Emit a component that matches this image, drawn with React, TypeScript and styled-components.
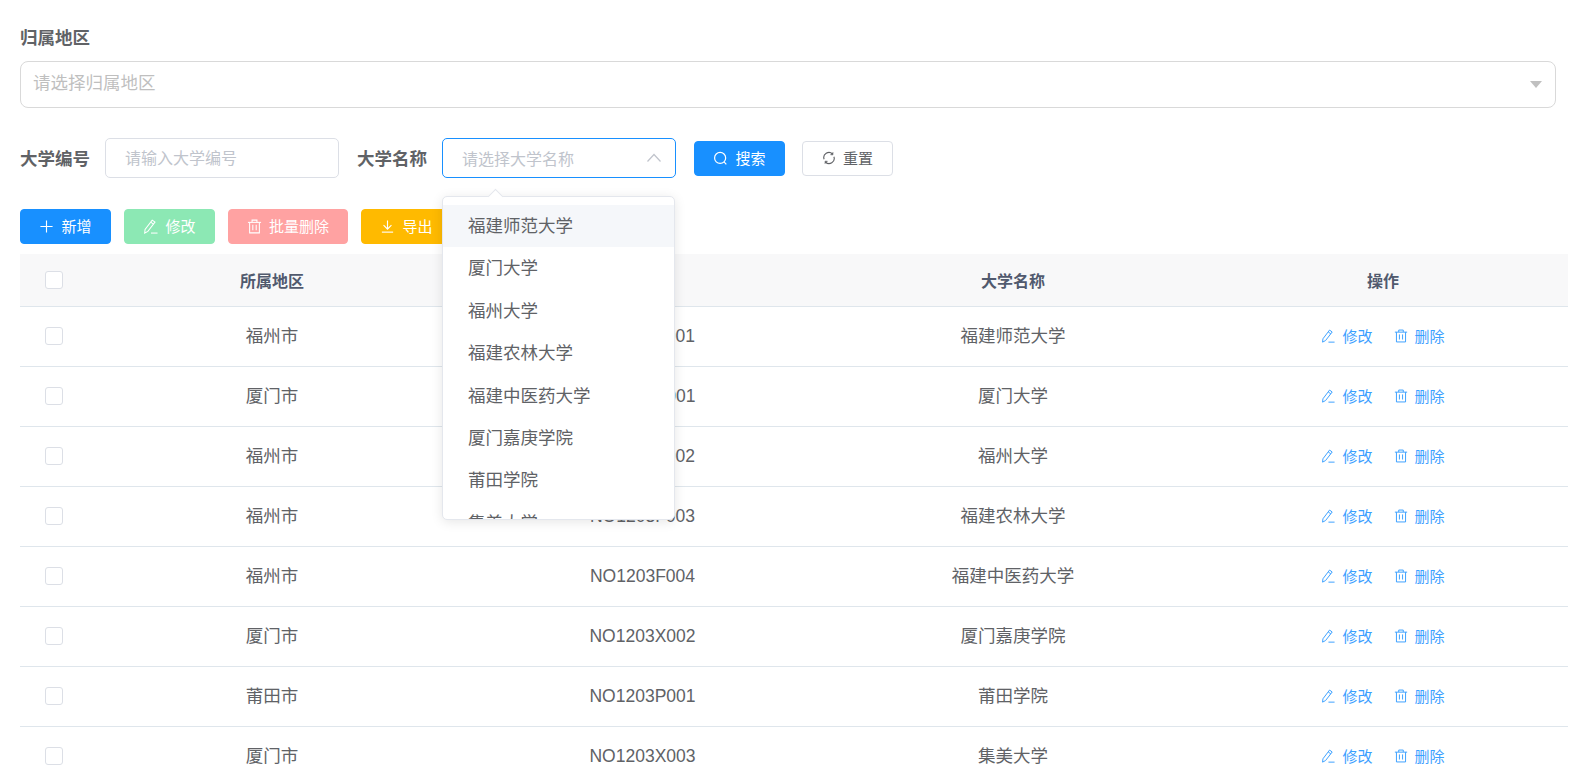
import React from 'react';
import styled, { createGlobalStyle } from 'styled-components';

const GlobalStyle = createGlobalStyle`
  html, body {
    margin: 0;
    height: 100%;
    overflow: hidden;
    background: #fff;
  }
  body {
    font-family: "Liberation Sans", "Noto Sans CJK SC", sans-serif;
    color: #606266;
  }
`;

const Page = styled.div`
  padding: 20px 13px 0 20px;
  height: 758px;
  overflow: hidden;
`;

const RegionField = styled.div`
  margin-right: 12px;
`;

const RegionLabel = styled.div`
  font-size: 17.5px;
  font-weight: bold;
  line-height: 36px;
  margin-bottom: 5px;
`;

const RegionSelect = styled.div`
  height: 47px;
  box-sizing: border-box;
  border: 1px solid #d9d9d9;
  border-radius: 8px;
  padding: 0 13px 7px 12px;
  display: flex;
  align-items: center;
  justify-content: space-between;
  font-size: 17.5px;
  color: #bfbfbf;
`;

const Caret = styled.span`
  width: 0;
  height: 0;
  margin-top: 7px;
  border-left: 6px solid transparent;
  border-right: 6px solid transparent;
  border-top: 7px solid #c0c0c0;
`;

const SearchRow = styled.div`
  margin-top: 30px;
  display: flex;
  align-items: center;
  height: 40px;
`;

const FieldLabel = styled.label`
  font-size: 17.5px;
  font-weight: bold;
  margin-right: 15px;
  padding-bottom: 2px;
`;

const TextInput = styled.input`
  width: 234px;
  height: 40px;
  box-sizing: border-box;
  border: 1px solid #dcdfe6;
  border-radius: 5px;
  padding: 2px 19px 0;
  margin-right: 18px;
  outline: none;
  font-family: inherit;
  font-size: 16px;
  &::placeholder {
    color: #c0c4cc;
    opacity: 1;
  }
`;

const SelectWrap = styled.div`
  position: relative;
  margin-right: 18px;
`;

const SelectBox = styled.div`
  width: 234px;
  height: 40px;
  box-sizing: border-box;
  border: 1px solid #1890ff;
  border-radius: 5px;
  padding: 0 13px 0 19px;
  display: flex;
  align-items: center;
  justify-content: space-between;
  font-size: 16px;
  color: #c0c4cc;
`;

const Dropdown = styled.div`
  position: absolute;
  top: 58px;
  left: 0;
  width: 233px;
  height: 324px;
  box-sizing: border-box;
  background: #fff;
  border: 1px solid #e4e7ed;
  border-radius: 5px;
  box-shadow: 0 2px 12px 0 rgba(0, 0, 0, 0.1);
  z-index: 10;
  &::before {
    content: '';
    position: absolute;
    top: -6px;
    left: 47px;
    width: 10px;
    height: 10px;
    background: #fff;
    border-top: 1px solid #e4e7ed;
    border-left: 1px solid #e4e7ed;
    transform: rotate(45deg);
  }
`;

const OptionList = styled.ul`
  list-style: none;
  margin: 0;
  padding: 8px 0 0;
  height: 100%;
  box-sizing: border-box;
  overflow: hidden;
  border-radius: 5px;
  position: relative;
`;

const Option = styled.li<{ $active?: boolean }>`
  height: 42.4px;
  line-height: 42.4px;
  padding-left: 25px;
  font-size: 17.5px;
  color: #606266;
  background: ${({ $active }) => ($active ? '#f5f7fa' : 'transparent')};
`;

const Button = styled.button<{ $bg: string }>`
  height: 35px;
  box-sizing: border-box;
  border: 1px solid ${({ $bg }) => ($bg === '#fff' ? '#dcdfe6' : $bg)};
  border-radius: 4px;
  background: ${({ $bg }) => $bg};
  color: ${({ $bg }) => ($bg === '#fff' ? '#606266' : '#fff')};
  font-family: inherit;
  font-size: 15px;
  display: inline-flex;
  align-items: center;
  justify-content: center;
  gap: 7px;
  padding: 0 0 2px;
  width: 91px;
  svg {
    margin-top: 2px;
  }
`;

const WideButton = styled(Button)`
  width: 120px;
`;

const ResetButton = styled(Button)`
  margin-left: 17px;
`;

const Toolbar = styled.div`
  margin-top: 31px;
  margin-bottom: 10px;
  display: flex;
  gap: 13px;
`;

const Table = styled.table`
  width: 1548px;
  border-collapse: collapse;
  table-layout: fixed;
`;

const HeadCell = styled.th`
  height: 52px;
  padding: 0;
  background: #f8f8f9;
  border-bottom: 1px solid #dfe6ec;
  font-size: 16px;
  font-weight: bold;
  color: #515a6e;
  text-align: center;
`;

const Cell = styled.td<{ $lift?: number }>`
  height: 60px;
  box-sizing: border-box;
  padding: 0 0 ${({ $lift }) => $lift ?? 0}px;
  border-bottom: 1px solid #dfe6ec;
  font-size: 17.5px;
  color: #606266;
  text-align: center;
`;

const CheckBox = styled.span`
  display: block;
  width: 18px;
  height: 18px;
  box-sizing: border-box;
  margin: 0 auto;
  border: 1px solid #dcdfe6;
  border-radius: 3px;
  background: #fff;
`;

const Actions = styled.div`
  display: flex;
  justify-content: center;
  gap: 21px;
`;

const ActionLink = styled.a`
  display: inline-flex;
  align-items: center;
  gap: 7px;
  font-size: 15px;
  color: #1890ff;
  opacity: 0.85;
  svg {
    width: 14px;
    height: 14px;
    margin-top: 2px;
  }
`;

const Icon = styled.svg.attrs({
  viewBox: '0 0 16 16',
  fill: 'none',
  stroke: 'currentColor',
  strokeWidth: 1.1,
})<{ $size?: number }>`
  width: ${({ $size }) => $size ?? 15}px;
  height: ${({ $size }) => $size ?? 15}px;
  flex: none;
`;

const ChevronIcon = styled(Icon)`
  color: #c0c4cc;
`;

const EditIcon = () => (
  <Icon>
    <path d="M9.8 1.2 12.8 3.4 5.2 13.2 1.8 15 2.2 11.2Z" />
    <path d="M8.2 3.3 11.2 5.5" />
    <path d="M8.5 15H15.5" />
  </Icon>
);

const TrashIcon = () => (
  <Icon>
    <path d="M1 3.6H15" />
    <path d="M5.4 3.4V1.2H10.6V3.4" />
    <path d="M2.8 3.6V14.8H13.2V3.6" />
    <path d="M6.2 6.2V12M9.8 6.2V12" />
  </Icon>
);

const SearchIcon = () => (
  <Icon>
    <circle cx="7.6" cy="7.4" r="5.9" strokeWidth="1.3" />
    <path d="M11.8 11.6 14.2 14.2" strokeWidth="1.3" />
  </Icon>
);

const RefreshIcon = () => (
  <Icon $size={14}>
    <path d="M2.4 9.4A5.8 5.8 0 0 1 12 3.4" strokeWidth="1.3" />
    <path d="M13.6 6.6A5.8 5.8 0 0 1 4 12.6" strokeWidth="1.3" />
    <path d="M12.6 1.6V4.4H9.8Z" fill="currentColor" strokeWidth="0.6" />
    <path d="M3.4 14.4V11.6H6.2Z" fill="currentColor" strokeWidth="0.6" />
  </Icon>
);

const PlusIcon = () => (
  <Icon>
    <path d="M8 1.5V14.5M1.5 8H14.5" strokeWidth="1.2" />
  </Icon>
);

const DownloadIcon = () => (
  <Icon>
    <path d="M8 1.5V10.5M3.8 6.6 8 10.8 12.2 6.6" strokeWidth="1.2" />
    <path d="M2 14H14" strokeWidth="1.2" />
  </Icon>
);

const ChevronUp = () => (
  <ChevronIcon $size={16}>
    <path d="M1.5 11.5 8 4.5 14.5 11.5" strokeWidth="1.2" />
  </ChevronIcon>
);

const options = [
  '福建师范大学',
  '厦门大学',
  '福州大学',
  '福建农林大学',
  '福建中医药大学',
  '厦门嘉庚学院',
  '莆田学院',
  '集美大学',
];

const rows = [
  ['福州市', 'NO1203F001', '福建师范大学'],
  ['厦门市', 'NO1203X001', '厦门大学'],
  ['福州市', 'NO1203F002', '福州大学'],
  ['福州市', 'NO1203F003', '福建农林大学'],
  ['福州市', 'NO1203F004', '福建中医药大学'],
  ['厦门市', 'NO1203X002', '厦门嘉庚学院'],
  ['莆田市', 'NO1203P001', '莆田学院'],
  ['厦门市', 'NO1203X003', '集美大学'],
];

const App = () => (
  <Page>
    <GlobalStyle />
    <RegionField>
      <RegionLabel>归属地区</RegionLabel>
      <RegionSelect>
        请选择归属地区
        <Caret />
      </RegionSelect>
    </RegionField>

    <SearchRow>
      <FieldLabel>大学编号</FieldLabel>
      <TextInput placeholder="请输入大学编号" />
      <FieldLabel>大学名称</FieldLabel>
      <SelectWrap>
        <SelectBox>
          请选择大学名称
          <ChevronUp />
        </SelectBox>
        <Dropdown>
          <OptionList>
            {options.map((name, i) => (
              <Option key={name} $active={i === 0}>
                {name}
              </Option>
            ))}
          </OptionList>
        </Dropdown>
      </SelectWrap>
      <Button $bg="#1890ff">
        <SearchIcon />
        搜索
      </Button>
      <ResetButton $bg="#fff">
        <RefreshIcon />
        重置
      </ResetButton>
    </SearchRow>

    <Toolbar>
      <Button $bg="#1890ff">
        <PlusIcon />
        新增
      </Button>
      <Button $bg="#8ce8b4">
        <EditIcon />
        修改
      </Button>
      <WideButton $bg="#ffa2a2">
        <TrashIcon />
        批量删除
      </WideButton>
      <Button $bg="#ffba00">
        <DownloadIcon />
        导出
      </Button>
    </Toolbar>

    <Table>
      <colgroup>
        <col width="67" />
        <col width="370" />
        <col width="371" />
        <col width="370" />
        <col width="370" />
      </colgroup>
      <thead>
        <tr>
          <HeadCell>
            <CheckBox />
          </HeadCell>
          <HeadCell>所属地区</HeadCell>
          <HeadCell>大学编号</HeadCell>
          <HeadCell>大学名称</HeadCell>
          <HeadCell>操作</HeadCell>
        </tr>
      </thead>
      <tbody>
        {rows.map(([area, code, name]) => (
          <tr key={code}>
            <Cell $lift={1}>
              <CheckBox />
            </Cell>
            <Cell $lift={5}>{area}</Cell>
            <Cell>{code}</Cell>
            <Cell $lift={5}>{name}</Cell>
            <Cell $lift={3}>
              <Actions>
                <ActionLink>
                  <EditIcon />
                  修改
                </ActionLink>
                <ActionLink>
                  <TrashIcon />
                  删除
                </ActionLink>
              </Actions>
            </Cell>
          </tr>
        ))}
      </tbody>
    </Table>
  </Page>
);

export default App;
